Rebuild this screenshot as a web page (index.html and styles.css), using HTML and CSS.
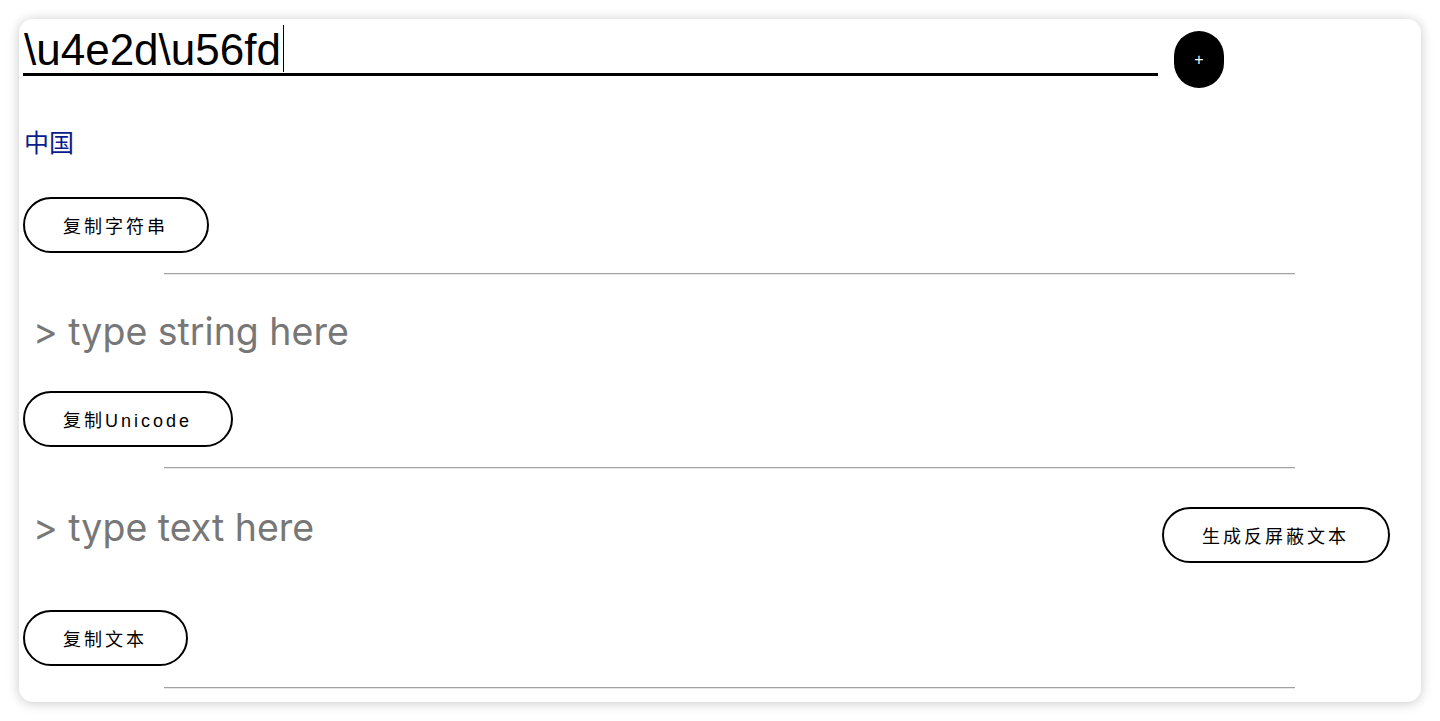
FILE: index.html
```html
<!DOCTYPE html>
<html lang="zh">
<head>
<meta charset="utf-8">
<title>Unicode</title>
<link rel="stylesheet" href="styles.css">
</head>
<body>
<div class="card">
  <div class="top-row">
    <div class="code-input">\u4e2d\u56fd<span class="caret"></span></div>
    <button class="add-btn">+</button>
  </div>
  <div class="result">中国</div>
  <button class="pill btn-first">复制字符串</button>
  <div class="rule"></div>
  <div class="field field-two">&gt; type string here</div>
  <button class="pill btn-copy">复制Unicode</button>
  <div class="rule"></div>
  <div class="text-row">
    <div class="field">&gt; type text here</div>
    <button class="pill gen-btn">生成反屏蔽文本</button>
  </div>
  <button class="pill btn-copy-last">复制文本</button>
  <div class="rule rule-last"></div>
</div>
</body>
</html>
```
FILE: styles.css
```css
html, body {
  margin: 0;
  padding: 0;
  background: #ffffff;
}
body {
  padding: 19px 19px 0 19px;
  height: 721px;
  box-sizing: border-box;
  overflow: hidden;
}
.card {
  width: 1402px;
  height: 683px;
  background: #ffffff;
  border-radius: 14px;
  box-shadow: 0 1px 12px rgba(0, 0, 0, 0.22);
  overflow: hidden;
  box-sizing: border-box;
  padding: 8px 0 0 4px;
  display: flex;
  flex-direction: column;
  align-items: flex-start;
}
.top-row {
  display: flex;
  align-items: flex-start;
  gap: 16px;
}
.code-input {
  width: 1134px;
  height: 46px;
  border-bottom: 3px solid #000;
  font-family: "Liberation Sans", Arial, sans-serif;
  font-size: 44px;
  line-height: 46px;
  color: #000;
  white-space: nowrap;
  display: flex;
  align-items: flex-start;
  padding-left: 1px;
  box-sizing: content-box;
}
.caret {
  display: inline-block;
  width: 1px;
  height: 47px;
  background: #000;
  margin-top: -2px;
  margin-left: 2px;
}
.add-btn {
  margin-top: 4px;
  width: 50px;
  height: 57px;
  border: 0;
  border-radius: 25px;
  background: #000;
  color: #ffffff;
  font-family: "Liberation Sans", Arial, sans-serif;
  font-size: 16px;
  padding: 0;
  display: flex;
  align-items: center;
  justify-content: center;
}
.result {
  margin-top: 41px;
  height: 24px;
  line-height: 24px;
  font-family: "Noto Sans CJK SC", sans-serif;
  font-size: 25px;
  color: #0a1a8f;
  padding-left: 1px;
}
.pill {
  height: 56px;
  box-sizing: border-box;
  border: 2px solid #000;
  border-radius: 28px;
  background: #fff;
  color: #000;
  padding: 0 39px 0 38px;
  font-family: "Liberation Sans", "Noto Sans CJK SC", sans-serif;
  font-size: 18px;
  letter-spacing: 3px;
  display: flex;
  align-items: center;
  justify-content: center;
  white-space: nowrap;
}
.btn-first {
  margin-top: 44px;
}
.rule {
  margin-top: 20px;
  margin-left: 141px;
  width: 1131px;
  height: 1px;
  background: #a2a2a2;
  border-bottom: 1px solid #e8e8e8;
}
.rule-last {
  margin-top: 21px;
}
.field {
  font-family: Inter, "Liberation Sans", sans-serif;
  font-size: 37.5px;
  line-height: 42px;
  color: #777777;
  padding-left: 10px;
  white-space: nowrap;
}
.field-two {
  margin-top: 36px;
}
.btn-copy {
  margin-top: 38px;
}
.text-row {
  margin-top: 38px;
  width: 1367px;
  display: flex;
  justify-content: space-between;
  align-items: flex-start;
}
.btn-copy-last {
  margin-top: 47px;
}
```
